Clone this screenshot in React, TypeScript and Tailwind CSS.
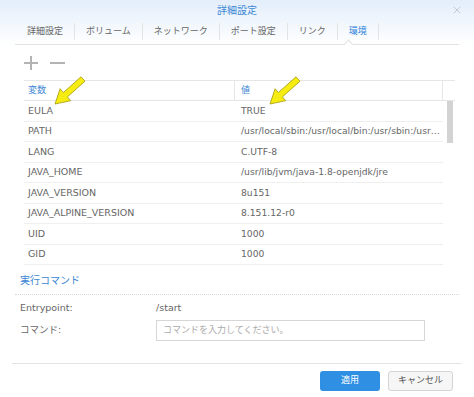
import { X } from 'lucide-react'

const font = { fontFamily: '"DejaVu Sans", "Noto Sans CJK JP", sans-serif' }

const tabs = ['詳細設定', 'ボリューム', 'ネットワーク', 'ポート設定', 'リンク', '環境']

const rows: [string, string][] = [
  ['EULA', 'TRUE'],
  ['PATH', '/usr/local/sbin:/usr/local/bin:/usr/sbin:/usr/bin:/sbin:/bin'],
  ['LANG', 'C.UTF-8'],
  ['JAVA_HOME', '/usr/lib/jvm/java-1.8-openjdk/jre'],
  ['JAVA_VERSION', '8u151'],
  ['JAVA_ALPINE_VERSION', '8.151.12-r0'],
  ['UID', '1000'],
  ['GID', '1000'],
]

function Arrow({ className }: { className: string }) {
  return (
    <svg className={className} width="35" height="31" viewBox="0 0 35 31">
      <path
        d="M29 0.8 L33 5.2 L15.4 20.9 L18.7 24.7 L3 28 L8.1 12.7 L11.4 16.5 Z"
        fill="#f7ec12"
        stroke="#a39a12"
        strokeWidth="0.8"
        strokeLinejoin="round"
      />
    </svg>
  )
}

export default function App() {
  return (
    <div className="relative w-[474px] h-[397px] overflow-hidden bg-white text-[#555]" style={font}>
      <div className="bg-gradient-to-b from-[#e3eefa] to-white">
        <div className="relative h-[19px] flex items-center justify-center pt-[2px]">
          <span className="text-[10px] text-[#3a86d4]">詳細設定</span>
          <X className="absolute right-[11px] top-[4px] text-[#b5bcc4]" size={12} strokeWidth={1.5} />
        </div>
        <div className="mx-[15px] h-[26px] flex items-center border-b border-[#e2e2e2]">
          {tabs.map((t, i) => (
            <div key={t} className="relative h-full flex items-center">
              <div
                className={`px-[11px] h-full flex items-center text-[9px] ${
                  i === 0 ? 'pl-[12px]' : ''
                } ${i === 5 ? 'text-[#2f83d8]' : 'text-[#666]'}`}
              >
                {t}
              </div>
              <div className="w-px h-[17px] bg-[#e4e4e4]" />
              {i === 5 && (
                <div className="absolute left-[7px] bottom-[-4px] w-[7px] h-[7px] rotate-45 bg-white border-l border-t border-[#e2e2e2]" />
              )}
            </div>
          ))}
        </div>
      </div>

      <div className="flex items-center gap-[12px] ml-[24px] mt-[11px] h-[14px]">
        <svg width="14" height="14" viewBox="0 0 14 14">
          <path d="M7 0 V14 M0 7 H14" stroke="#b3b3b3" strokeWidth="2" />
        </svg>
        <svg width="15" height="14" viewBox="0 0 15 14">
          <path d="M0 7 H15" stroke="#b3b3b3" strokeWidth="2" />
        </svg>
      </div>

      <div className="ml-[24px] mr-[19px] mt-[10px] border-t border-[#e6e6e6]">
        <div className="flex h-[20px] items-center border-b border-[#e6e6e6] text-[9px] text-[#3a86d4]">
          <div className="w-[211px] pl-[4px] h-full flex items-center border-r border-[#e6e6e6]">変数</div>
          <div className="w-[208px] pl-[6px] h-full flex items-center border-r border-[#e6e6e6]">値</div>
        </div>
        <div className="flex">
          <div className="w-[419px]">
            {rows.map(([k, v]) => (
              <div key={k} className="flex h-[20.5px] items-center border-b border-[#efefef] text-[9.5px] text-[#666]">
                <div className="w-[211px] pl-[4px] truncate">{k}</div>
                <div className="w-[208px] pl-[6px] pr-[2px] truncate text-[9.2px]">{v}</div>
              </div>
            ))}
          </div>
          <div className="w-[12px] pl-[4px]">
            <div className="w-[6px] h-[42px] bg-[#d3d3d3]" />
          </div>
        </div>
      </div>

      <div className="mx-[15px] mt-[2px] border-b border-dotted border-[#d8d8d8] pb-[3px] pl-[5px]">
        <span className="text-[10px] text-[#3a86d4]" style={{ fontFamily: '"Noto Sans CJK JP", sans-serif' }}>
          実行コマンド
        </span>
      </div>

      <div className="ml-[20px] mt-[5px] flex items-center h-[16px] text-[9.5px] text-[#666]">
        <div className="w-[136px]">Entrypoint:</div>
        <div>/start</div>
      </div>
      <div className="ml-[20px] mt-[4px] flex items-center text-[9.5px] text-[#666]">
        <div className="w-[136px]">コマンド:</div>
        <div className="w-[269px] h-[21px] border border-[#d6d6d6] flex items-center px-[6px] text-[9px] text-[#aaa]">
          コマンドを入力してください。
        </div>
      </div>

      <div className="ml-[12px] mr-[13px] mt-[22px] border-t border-[#e3e3e3] flex justify-end gap-[8px] pt-[7px] pr-[8px]">
        <button className="w-[60px] h-[20px] rounded-[3px] bg-[#2e8fe3] text-white text-[9px]">適用</button>
        <button className="w-[65px] h-[20px] rounded-[3px] bg-[#f6f6f6] border border-[#d4d4d4] text-[#555] text-[9px]">
          キャンセル
        </button>
      </div>

      <Arrow className="absolute left-[52px] top-[76px]" />
      <Arrow className="absolute left-[267px] top-[76px]" />
    </div>
  )
}
